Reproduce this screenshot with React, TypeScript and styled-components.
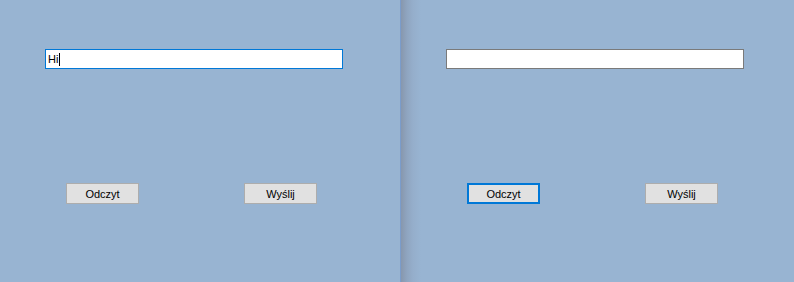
import React from 'react'
import styled, { createGlobalStyle } from 'styled-components'

const GlobalStyle = createGlobalStyle`
  html, body {
    margin: 0;
    padding: 0;
    background-color: #98b4d2;
  }

  body {
    font-family: "Liberation Sans", Arial, sans-serif;
    font-size: 11px;
    color: #000;
  }
`

const Desktop = styled.div`
  display: flex;
  width: 794px;
  height: 282px;
  overflow: hidden;
  background-color: #98b4d2;
`

const Panel = styled.div<{ $shadow?: boolean }>`
  display: flex;
  flex-direction: column;
  box-sizing: border-box;
  width: ${ p => p.$shadow ? '394px' : '400px' };
  height: 100%;
  padding: 49px 0 0 45px;
  border-left: ${ p => p.$shadow ? '1px solid #7a9ccb' : '0' };
  background: ${ p => p.$shadow
    ? 'linear-gradient(to right, #8797ad 0px, #8fa5c0 6px, #95aecb 12px, #98b4d2 20px)'
    : '#98b4d2' };
`

const TextBox = styled.div<{ $focused?: boolean }>`
  display: flex;
  align-items: center;
  box-sizing: border-box;
  width: 298px;
  height: 20px;
  padding: 0 2px;
  border: 1px solid ${ p => p.$focused ? '#0078d7' : '#7a7a7a' };
  background-color: #fff;
  color: #000;
  font-size: 11px;
  line-height: 1;
`

const Caret = styled.span`
  display: inline-block;
  width: 1px;
  height: 13px;
  margin-left: 1px;
  background-color: #000;
`

const ButtonRow = styled.div`
  display: flex;
  gap: 105px;
  margin-top: 114px;
  padding-left: 21px;
`

const FormButton = styled.button<{ $focused?: boolean }>`
  box-sizing: border-box;
  width: 73px;
  height: 21px;
  padding: 0;
  border: ${ p => p.$focused ? '2px solid #0078d7' : '1px solid #adadad' };
  border-radius: 0;
  background-color: #e1e1e1;
  color: #000;
  font-family: "Liberation Sans", Arial, sans-serif;
  font-size: 11px;
  cursor: default;
  outline: none;
`

interface FormPanelProps {
  text?: string,
  inputFocused?: boolean,
  readFocused?: boolean,
  shadow?: boolean,
}

const FormPanel: React.FC<FormPanelProps> = ({ text, inputFocused, readFocused, shadow }) => (
  <Panel $shadow={ shadow }>
    <TextBox $focused={ inputFocused }>
      { text }
      { inputFocused && <Caret /> }
    </TextBox>
    <ButtonRow>
      <FormButton $focused={ readFocused }>Odczyt</FormButton>
      <FormButton>Wyślij</FormButton>
    </ButtonRow>
  </Panel>
)

const App: React.FC = () => (
  <>
    <GlobalStyle />
    <Desktop>
      <FormPanel text="Hi" inputFocused />
      <FormPanel shadow readFocused />
    </Desktop>
  </>
)

export default App
